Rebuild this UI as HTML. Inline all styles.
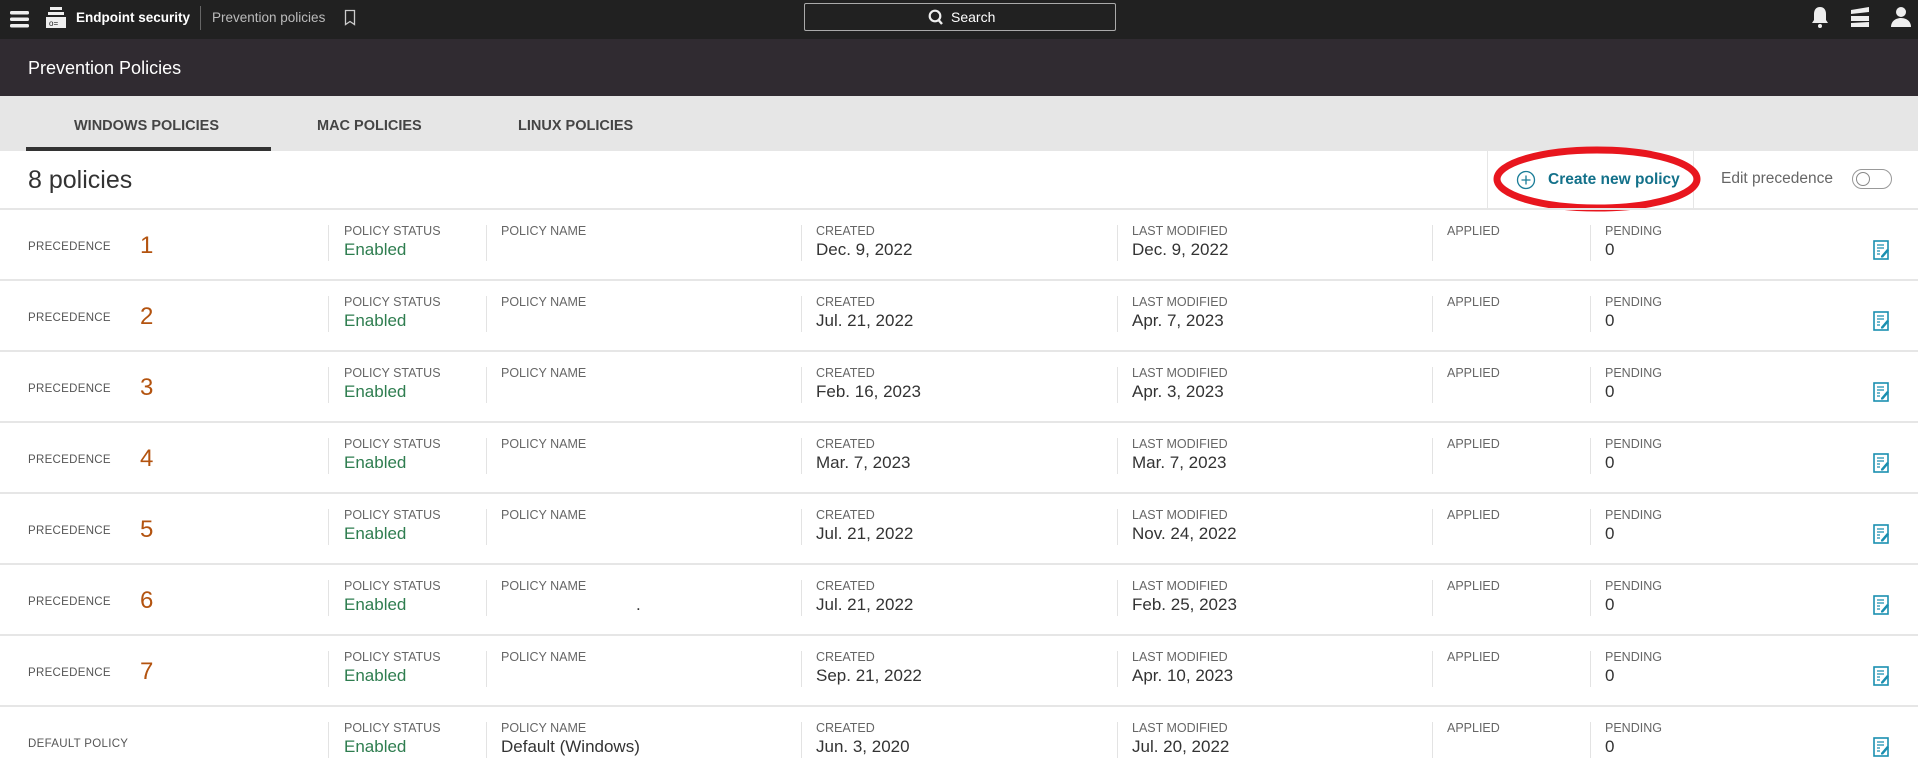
<!DOCTYPE html>
<html><head><meta charset="utf-8"><style>
*{margin:0;padding:0;box-sizing:border-box}
body{width:1918px;height:779px;overflow:hidden;background:#fff;font-family:"Liberation Sans",sans-serif;position:relative;color:#333}
.abs{position:absolute;white-space:nowrap}
.top{position:absolute;left:0;top:0;width:1918px;height:39px;background:#212121}
.hdr{position:absolute;left:0;top:39px;width:1918px;height:57px;background:#302b31}
.tabs{position:absolute;left:0;top:96px;width:1918px;height:55px;background:#e6e6e6}
.tab{position:absolute;top:118px;font-size:14.5px;font-weight:bold;color:#444;white-space:nowrap}
.row{position:absolute;left:0;width:1918px;height:71px;border-top:2px solid #e6e6e6}
.lbl{position:absolute;top:14px;font-size:12.5px;color:#666;white-space:nowrap}
.val{position:absolute;top:30px;font-size:17px;color:#333;white-space:nowrap}
.dv{position:absolute;top:15px;width:1px;height:36px;background:#e3e3e3}
.pl{position:absolute;left:28px;top:31px;font-size:11.5px;color:#555;letter-spacing:.3px;white-space:nowrap}
.pn{position:absolute;top:22px;left:140px;font-size:24px;color:#b3530f}
.en{color:#2e7d4f}
</style></head><body>
<div class="top"></div>
<svg class="abs" style="left:10px;top:9px" width="20" height="20"><rect x="0" y="2" width="19" height="3.5" rx="1.5" fill="#eee"/><rect x="0" y="8.5" width="19" height="3.5" rx="1.5" fill="#eee"/><rect x="0" y="15" width="19" height="3.5" rx="1.5" fill="#eee"/></svg>
<svg class="abs" style="left:46px;top:7px" width="20" height="22"><rect x="4" y="0" width="12" height="3" fill="#eee"/><rect x="2" y="5" width="16" height="3" fill="#eee"/><rect x="0" y="10" width="20" height="11" fill="#eee"/><text x="3" y="19" font-size="8" fill="#212121" font-family="Liberation Sans">o=</text></svg>
<div class="abs" style="left:76px;top:10px;font-size:13.5px;font-weight:bold;color:#fff">Endpoint security</div>
<div class="abs" style="left:200px;top:6px;width:1px;height:24px;background:#666"></div>
<div class="abs" style="left:212px;top:10px;font-size:13.5px;color:#bbb">Prevention policies</div>
<svg class="abs" style="left:344px;top:9px" width="13" height="17"><path d="M1.5 1.5h9v14l-4.5-3-4.5 3z" fill="none" stroke="#ccc" stroke-width="1.3"/></svg>
<div class="abs" style="left:804px;top:3px;width:312px;height:28px;border:1px solid #aaa;border-radius:2px"></div>
<svg class="abs" style="left:928px;top:9px" width="16" height="17"><circle cx="7" cy="7" r="5.3" fill="none" stroke="#eee" stroke-width="2.2"/><path d="M10.5 11l3.5 4" stroke="#eee" stroke-width="2.4"/></svg>
<div class="abs" style="left:951px;top:9px;font-size:14px;color:#fff">Search</div>
<svg class="abs" style="left:1810px;top:5px" width="20" height="24"><path d="M10 2c-4 0-6 3-6 7v6l-2 3h16l-2-3V9c0-4-2-7-6-7z" fill="#eee"/><circle cx="10" cy="21" r="2" fill="#eee"/></svg>
<svg class="abs" style="left:1850px;top:7px" width="20" height="21"><path d="M1 3l18-3v5L1 7z M1 9h18v5H1z M1 16l18-1v5H1z" fill="#eee"/></svg>
<svg class="abs" style="left:1890px;top:5px" width="22" height="24"><circle cx="11" cy="7" r="5" fill="#eee"/><path d="M1 22c0-6 5-9 10-9s10 3 10 9z" fill="#eee"/></svg>
<div class="hdr"></div>
<div class="abs" style="left:28px;top:58px;font-size:18px;color:#fff">Prevention Policies</div>
<div class="tabs"></div>
<div class="tab" style="left:74px">WINDOWS POLICIES</div>
<div class="tab" style="left:317px">MAC POLICIES</div>
<div class="tab" style="left:518px">LINUX POLICIES</div>
<div class="abs" style="left:26px;top:147px;width:245px;height:4px;background:#333"></div>
<div class="abs" style="left:28px;top:166px;font-size:25px;color:#333">8 policies</div>
<div class="abs" style="left:1487px;top:151px;width:1px;height:57px;background:#e6e6e6"></div>
<div class="abs" style="left:1693px;top:151px;width:1px;height:57px;background:#e6e6e6"></div>
<svg class="abs" style="left:1492px;top:143px" width="210" height="72"><ellipse cx="105" cy="36" rx="100" ry="29" fill="none" stroke="#e8161e" stroke-width="7"/></svg>
<svg class="abs" style="left:1516px;top:170px" width="20" height="20"><circle cx="10" cy="10" r="8.5" fill="none" stroke="#1a7d98" stroke-width="1.3"/><path d="M10 5.5v9M5.5 10h9" stroke="#1a7d98" stroke-width="1.3"/></svg>
<div class="abs" style="left:1548px;top:171px;font-size:15.5px;font-weight:bold;color:#13718a">Create new policy</div>
<div class="abs" style="left:1721px;top:170px;font-size:15.5px;color:#666">Edit precedence</div>
<div class="abs" style="left:1852px;top:169px;width:40px;height:20px;border:1.5px solid #999;border-radius:10px"></div>
<div class="abs" style="left:1856px;top:172px;width:14px;height:14px;border:1.5px solid #888;border-radius:50%"></div>

<div id="rows"></div>
<script>
const d=[["1","Dec. 9, 2022","Dec. 9, 2022",""],["2","Jul. 21, 2022","Apr. 7, 2023",""],["3","Feb. 16, 2023","Apr. 3, 2023",""],["4","Mar. 7, 2023","Mar. 7, 2023",""],["5","Jul. 21, 2022","Nov. 24, 2022",""],["6","Jul. 21, 2022","Feb. 25, 2023","."],["7","Sep. 21, 2022","Apr. 10, 2023",""],["","Jun. 3, 2020","Jul. 20, 2022","Default (Windows)"]];
let h="";
d.forEach((r,i)=>{const t=208+i*71;
h+=`<div class="row" style="top:${t}px">`+
(r[0]?`<div class="pl">PRECEDENCE</div><div class="pn">${r[0]}</div>`:`<div class="pl">DEFAULT POLICY</div>`)+
`<div class="dv" style="left:328px"></div><div class="lbl" style="left:344px">POLICY STATUS</div><div class="val en" style="left:344px">Enabled</div>`+
`<div class="dv" style="left:486px"></div><div class="lbl" style="left:501px">POLICY NAME</div><div class="val" style="left:${r[3]=="."?636:501}px">${r[3]}</div>`+
`<div class="dv" style="left:801px"></div><div class="lbl" style="left:816px">CREATED</div><div class="val" style="left:816px">${r[1]}</div>`+
`<div class="dv" style="left:1117px"></div><div class="lbl" style="left:1132px">LAST MODIFIED</div><div class="val" style="left:1132px">${r[2]}</div>`+
`<div class="dv" style="left:1432px"></div><div class="lbl" style="left:1447px">APPLIED</div>`+
`<div class="dv" style="left:1590px"></div><div class="lbl" style="left:1605px">PENDING</div><div class="val" style="left:1605px">0</div>`+
`<svg style="position:absolute;left:1873px;top:30px" width="17" height="20"><rect x="1" y="1" width="14" height="18" fill="none" stroke="#1a8fb0" stroke-width="1.6"/><path d="M4 5h7M4 8h7M4 11h3M4 14h3" stroke="#1a8fb0" stroke-width="1.2"/><path d="M8 16l6-7 2 1.5-6 7H8z" fill="#1a8fb0"/></svg></div>`;});
document.getElementById("rows").innerHTML=h;
</script>
</body></html>
